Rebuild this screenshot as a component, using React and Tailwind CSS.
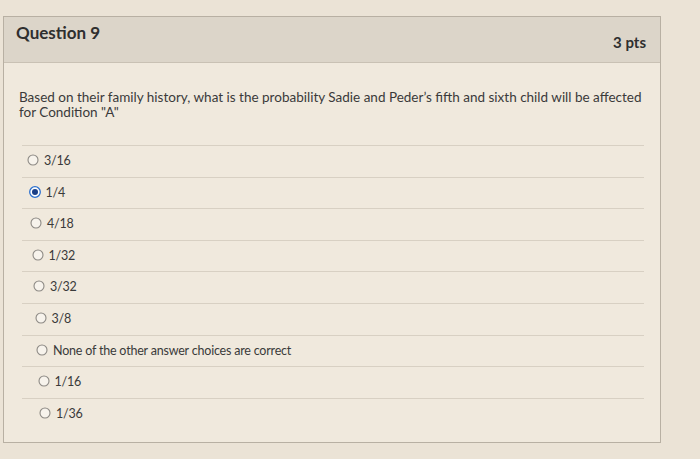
export default function App() {
  const options = ["3/16", "1/4", "4/18", "1/32", "3/32", "3/8", "None of the other answer choices are correct", "1/16", "1/36"];
  const selected = 1;
  return (
    <div className="w-[700px] h-[459px] overflow-hidden bg-[#ebe3d6] pt-[16px] pl-[3px]" style={{ fontFamily: "Lato, 'Open Sans', sans-serif" }}>
      <div className="w-[658px] h-[427px] border border-[#b8b0a3] bg-[#f0e9dd] flex flex-col">
        <div className="h-[46px] bg-[#dcd5c9] border-b border-[#c9c1b4] flex justify-between items-start px-[12px]">
          <div className="pt-[3px] text-[17px] font-bold text-[#2f2f2f]">Question 9</div>
          <div className="pt-[14px] text-[15px] font-bold text-[#2f2f2f] pr-[2px]">3 pts</div>
        </div>
        <div className="pt-[27px] px-[15px] text-[13.5px] leading-[15px] text-[#3a3a3a]">
          <p>Based on their family history, what is the probability Sadie and Peder’s fifth and sixth child will be affected</p>
          <p>for Condition "A"</p>
        </div>
        <div className="mt-[25px] ml-[18px] mr-[16px]">
          {options.map((o, i) => (
            <div key={o} className="h-[31.6px] border-t border-[#d8d0c3] flex items-start pt-[7px] gap-[5px]" style={{ paddingLeft: 5 + i * 1.5 }}>
              {i === selected ? (
                <svg width="12" height="12" viewBox="0 0 12 12" className="mt-[1px]">
                  <circle cx="6" cy="6" r="5.3" fill="#fff" stroke="#2a6fcf" strokeWidth="1.3" />
                  <circle cx="6" cy="6" r="3" fill="#1a3f86" />
                </svg>
              ) : (
                <svg width="12" height="12" viewBox="0 0 12 12" className="mt-[1px]">
                  <circle cx="6" cy="6" r="5" fill="#f7f3ec" stroke="#8d8a85" strokeWidth="1.1" />
                </svg>
              )}
              <span className="text-[12.5px] leading-[15px] tracking-[-0.2px] text-[#3a3a3a]">{o}</span>
            </div>
          ))}
        </div>
      </div>
    </div>
  );
}
